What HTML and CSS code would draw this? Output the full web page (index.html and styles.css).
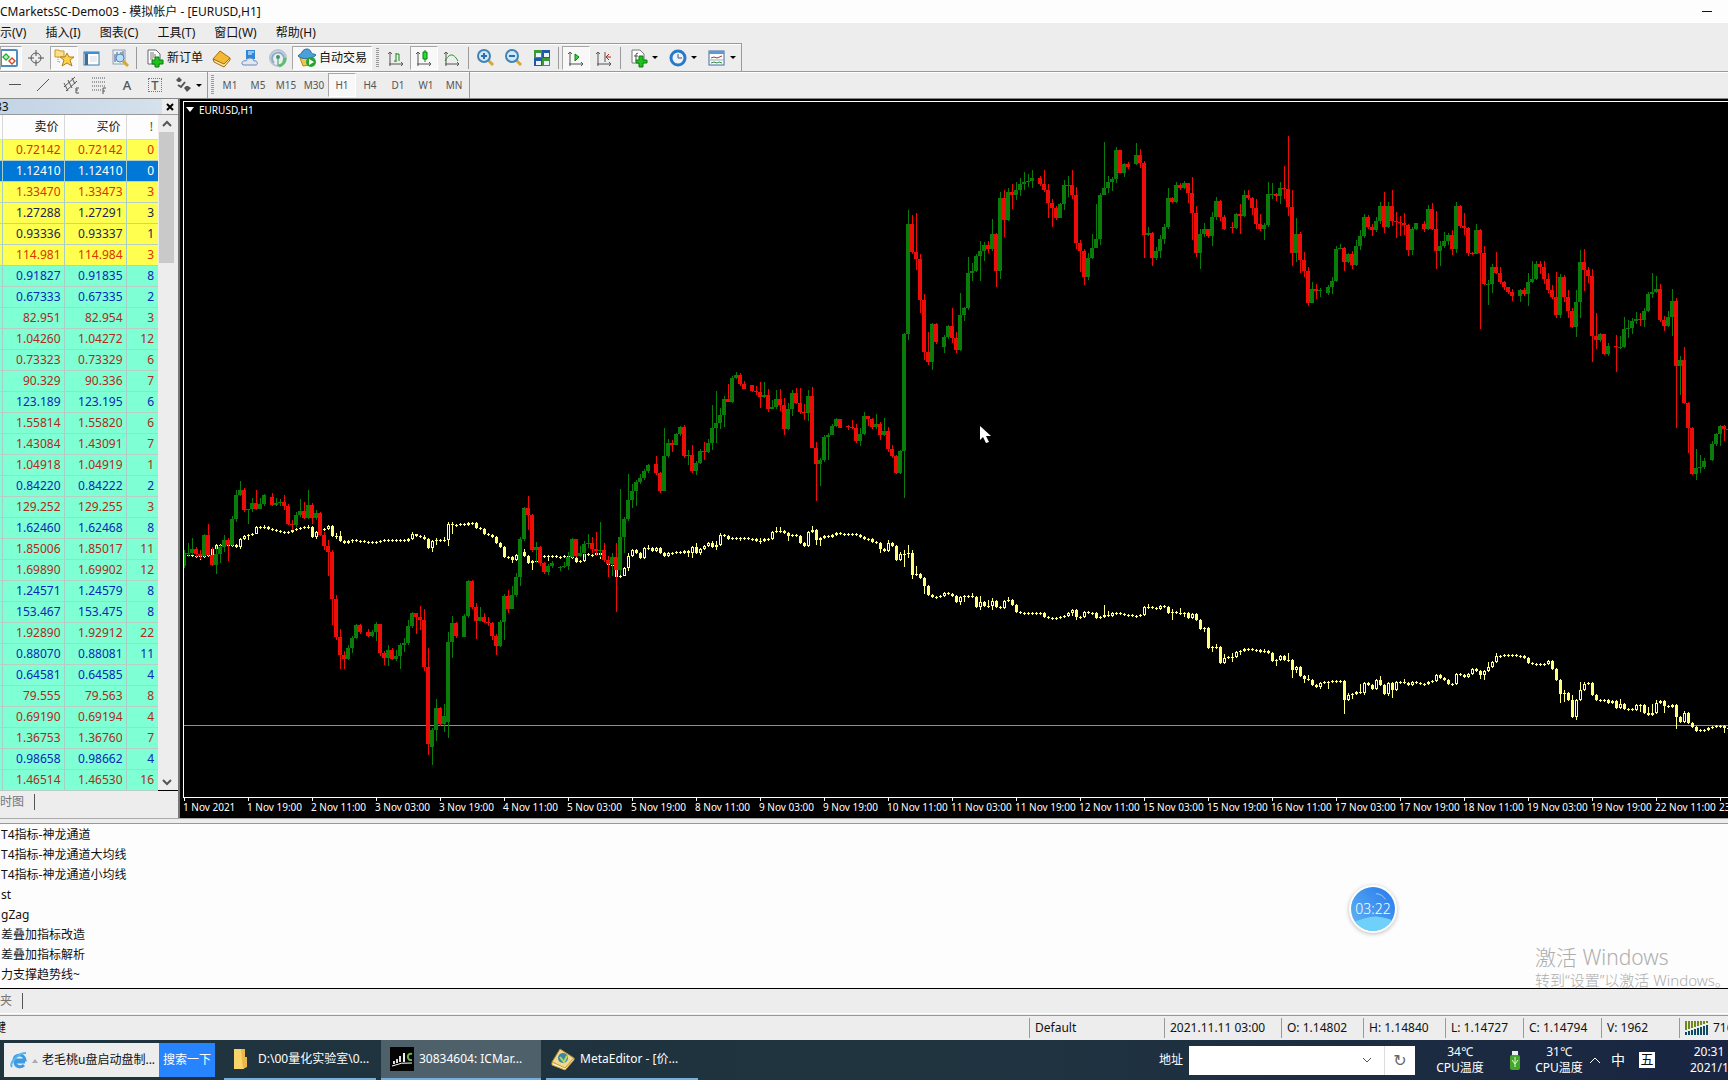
FILE: index.html
```html
<!DOCTYPE html>
<html lang="zh-CN">
<head>
<meta charset="utf-8">
<title>EURUSD,H1</title>
<link rel="stylesheet" href="styles.css">
</head>
<body>
<div class="app">
  <header class="titlebar">
    <h1 class="title">CMarketsSC-Demo03 - 模拟帐户 - [EURUSD,H1]</h1>
    <button class="minimize" aria-label="最小化"><svg width="10" height="2"><path d="M0 0h10v1H0z" fill="#111"/></svg></button>
  </header>
  <nav class="menubar">
    <button>示(V)</button><button>插入(I)</button><button>图表(C)</button><button>工具(T)</button><button>窗口(W)</button><button>帮助(H)</button>
  </nav>

  <div class="toolbar toolbar-main">
    <button class="tool first on" aria-label="市场报价"><svg width="20" height="20"><rect x="0" y="2" width="16" height="16" rx="1" fill="#fff" stroke="#4a8ec4" stroke-width="2"/><path d="M5 5l4 4-4 4-4-4z" fill="#1fae2d"/><path d="M5 7v4M3 9h4" stroke="#fff"/><path d="M11 9l4 4-4 4-4-4z" fill="#d0502a"/><path d="M11 11l2 2-2 2-2-2z" fill="#fff"/></svg></button>
    <button class="tool" aria-label="数据窗口"><svg width="20" height="20" fill="none" stroke="#555"><circle cx="10" cy="10" r="5"/><path d="M10 2v6M10 12v6M2 10h6M12 10h6"/></svg></button>
    <button class="tool on" aria-label="导航"><svg width="20" height="20"><path d="M1 2h4l1 1h4v6H1z" fill="#fbe08a" stroke="#c89a20"/><path d="M4 9v5h3" fill="none" stroke="#888" stroke-dasharray="1 1"/><path d="M13 5l2 4 5 0-4 3 2 6-5-3-5 3 2-6-4-3h5z" fill="#fcd24a" stroke="#b5801a"/></svg></button>
    <button class="tool" aria-label="终端"><svg width="20" height="20"><rect x="2" y="4" width="15" height="13" fill="#fff" stroke="#3e7ca8"/><path d="M2 4h15v2H2z" fill="#3e8ed0"/><path d="M3 6h3v11H3z" fill="#3a6ea0"/><path d="M8 9h7M8 11h7M8 13h7" stroke="#d2dbe4"/></svg></button>
    <button class="tool" aria-label="策略测试"><svg width="20" height="20"><rect x="3" y="2" width="12" height="14" fill="#e9f1f8" stroke="#8ba2b8"/><path d="M5 6v8M7 4v7M11 4v5M13 3v6" stroke="#557"/><circle cx="10" cy="10" r="4" fill="#bcdff8" stroke="#4a86b8"/><path d="M13 13l5 5" stroke="#d6a92e" stroke-width="3"/></svg></button>
    <span class="sep"></span>
    <button class="tool labelled" id="new-order"><svg width="20" height="20"><path d="M3 2h8l4 4v10H3z" fill="#fff" stroke="#666"/><path d="M5 5h4M5 7h6M5 9h6M5 11h3" stroke="#777"/><path d="M10 9h4v3h4v4h-4v3h-4v-3H7v-4h3z" fill="#1fc01f" stroke="#0c7c10"/></svg><span>新订单</span></button>
    <button class="tool" aria-label="MetaEditor"><svg width="20" height="20"><path d="M8 3l10 7-6 7L1 11z" fill="#f3b936" stroke="#a56c0d"/><path d="M1 11l1 3 10 5 6-7v-2l-6 6z" fill="#fbe6a8" stroke="#a56c0d"/></svg></button>
    <button class="tool" aria-label="虚拟主机"><svg width="20" height="20"><path d="M6 2h9v9H6z" fill="#2f86d6"/><path d="M8 4h6M8 6h4" stroke="#fff"/><path d="M3 17c-3-3 1-5 3-4 1-4 7-4 8 0 4-1 4 4 2 4z" fill="#dfe7f2" stroke="#6c89b8"/></svg></button>
    <button class="tool" aria-label="信号"><svg width="20" height="20" fill="none"><circle cx="10" cy="10" r="8" stroke="#b8c4d4" stroke-width="2"/><path d="M6 15a6 6 0 1 1 9-1" stroke="#8cabc8" stroke-width="2"/><circle cx="10" cy="9" r="2" fill="#3a9c5c"/><path d="M11 18c5-2 6-4 6-8" stroke="#5dbd70" stroke-width="3"/><path d="M10 10v8" stroke="#3a9c5c"/></svg></button>
    <button class="tool labelled on auto"><svg width="20" height="20"><path d="M3 10l12-1-2 8-7 1z" fill="#f1c64b" stroke="#b88a1a"/><path d="M1 8c2-3 3-1 4-4 2-4 8-4 9 0 1 3 3 1 5 3-3 4-14 5-18 1z" fill="#4aa0d8" stroke="#276fa4"/><circle cx="14" cy="14" r="5" fill="#27a52e"/><path d="M12 11l5 3-5 3z" fill="#fff"/></svg><span>自动交易</span></button>
    <span class="grip"></span>
    <button class="tool" aria-label="柱状图"><svg width="20" height="20" fill="none" stroke="#555"><path d="M4 18V4M2 6l2-2 2 2M3 16h14M15 14l2 2-2 2"/><path d="M10 5v9M8 13h2M10 6h3M13 6v7" stroke="#17871d"/></svg></button>
    <button class="tool on" aria-label="蜡烛图"><svg width="20" height="20" fill="none" stroke="#555"><path d="M4 18V4M2 6l2-2 2 2M3 16h14M15 14l2 2-2 2"/><path d="M11 2v12" stroke="#0a7c12"/><path d="M9 4h4v7H9z" fill="#20e030" stroke="#0a7c12"/></svg></button>
    <button class="tool" aria-label="折线图"><svg width="20" height="20" fill="none" stroke="#555"><path d="M4 18V4M2 6l2-2 2 2M3 16h14M15 14l2 2-2 2"/><path d="M3 13c4-7 8-9 13 0" stroke="#1c8a22"/></svg></button>
    <span class="sep"></span>
    <button class="tool" aria-label="放大"><svg width="20" height="20"><path d="M11 11l6 6" stroke="#d6a92e" stroke-width="3"/><circle cx="8" cy="8" r="6" fill="#cfe9fa" stroke="#4283b5" stroke-width="2"/><path d="M5 8h6M8 5v6" stroke="#2a70a4" stroke-width="2"/></svg></button>
    <button class="tool" aria-label="缩小"><svg width="20" height="20"><path d="M11 11l6 6" stroke="#d6a92e" stroke-width="3"/><circle cx="8" cy="8" r="6" fill="#cfe9fa" stroke="#4283b5" stroke-width="2"/><path d="M5 8h6" stroke="#2a70a4" stroke-width="2"/></svg></button>
    <button class="tool" aria-label="平铺窗口"><svg width="20" height="20"><path d="M2 2h8v8H2zM10 10h8v8h-8z" fill="#3a9a34"/><path d="M10 2h8v8h-8zM2 10h8v8H2z" fill="#2457a8"/><path d="M4 5h5v4H4zM12 5h5v4h-5zM4 13h5v4H4zM12 13h5v4h-5z" fill="#e9f4ff"/></svg></button>
    <span class="sep"></span>
    <button class="tool on" aria-label="自动滚动"><svg width="20" height="20" fill="none" stroke="#555"><path d="M4 18V4M2 6l2-2 2 2M3 16h14M15 14l2 2-2 2"/><path d="M9 6l4 3-4 4z" fill="#35d53c" stroke="#0c7c10"/></svg></button>
    <button class="tool" aria-label="图表平移"><svg width="20" height="20" fill="none" stroke="#555"><path d="M4 18V4M2 6l2-2 2 2M3 16h14M15 14l2 2-2 2M11 4v10"/><path d="M17 9h-5M15 6l-3 3 3 3" stroke="#b02a20"/></svg></button>
    <span class="sep"></span>
    <button class="tool drop" aria-label="技术指标"><svg width="20" height="20"><path d="M3 2h8l4 4v9H3z" fill="#fff" stroke="#777"/><path d="M7 13V6l2-1M5 8h4" fill="none" stroke="#555"/><path d="M10 8h4v4h4v3h-4v4h-4v-4H7v-3h3z" fill="#1fc01f" stroke="#0c7c10"/></svg><i class="arrow"></i></button>
    <button class="tool drop" aria-label="时间周期"><svg width="20" height="20"><circle cx="10" cy="10" r="7" fill="#eaf3fc" stroke="#2a78c8" stroke-width="3"/><path d="M10 6v4h4" fill="none" stroke="#555"/></svg><i class="arrow"></i></button>
    <button class="tool drop" aria-label="模板"><svg width="20" height="20"><rect x="2" y="3" width="15" height="14" fill="#fff" stroke="#3e6d9c"/><path d="M2 3h15v3H2z" fill="#5c9ad6"/><path d="M4 10l3-1 3 1 5-2" fill="none" stroke="#a04030"/><path d="M2 12h15" stroke="#9ab"/><path d="M4 15l3-1 3 1 2-1 3 1" fill="none" stroke="#2c8a3c"/></svg><i class="arrow"></i></button>
  </div>

  <div class="toolbar toolbar-lines">
    <button class="tool wide" aria-label="水平线"><svg width="20" height="20"><path d="M4 9h12v1H4z" fill="#555"/></svg></button>
    <button class="tool" aria-label="趋势线"><svg width="20" height="20"><path d="M4 16L16 4" stroke="#555"/></svg></button>
    <button class="tool" aria-label="等距通道"><svg width="20" height="20" fill="none" stroke="#555"><path d="M3 12L14 2M5 16L16 6M3 8l4 8M7 5l4 8M11 3l3 6"/><path d="M18 13h-3v5h3M15 15h2"/></svg></button>
    <button class="tool" aria-label="斐波纳奇"><svg width="20" height="20" fill="none" stroke="#555"><path d="M3 3h14M3 7h14M3 11h14M3 15h9" stroke-dasharray="1 1"/><path d="M17 13h-3v6M14 16h2"/></svg></button>
    <button class="tool glyph">A</button>
    <button class="tool glyph" aria-label="文本标签"><span class="dotted">T</span></button>
    <button class="tool drop short" aria-label="箭头"><svg width="20" height="20"><path d="M3 5l3-3 3 3-2 2H5zM11 13l3 4 4-4-3-2h-2z" fill="#555"/><path d="M5 10l3 2 4-5" fill="none" stroke="#555" stroke-width="2"/></svg><i class="arrow"></i></button>
    <span class="sep tall"></span><span class="grip"></span>
    <button class="tool tf">M1</button><button class="tool tf">M5</button><button class="tool tf">M15</button><button class="tool tf">M30</button><button class="tool tf on">H1</button><button class="tool tf">H4</button><button class="tool tf">D1</button><button class="tool tf">W1</button><button class="tool tf">MN</button>
    <span class="sep tall"></span>
  </div>

  <main class="workspace">
    <section class="quotes">
      <div class="quotes-head"><span>33</span><button class="close" aria-label="关闭"><svg width="8" height="8"><path d="M1 1l6 6M7 1L1 7" stroke="#000" stroke-width="2"/></svg></button></div>
      <div class="quotes-body">
        <table class="rates">
          <thead><tr><th class="edge"></th><th>卖价</th><th>买价</th><th>!</th></tr></thead>
          <tbody>
            <tr class="y r"><td></td><td>0.72142</td><td>0.72142</td><td>0</td></tr>
            <tr class="sel"><td></td><td>1.12410</td><td>1.12410</td><td>0</td></tr>
            <tr class="y r"><td></td><td>1.33470</td><td>1.33473</td><td>3</td></tr>
            <tr class="y b"><td></td><td>1.27288</td><td>1.27291</td><td>3</td></tr>
            <tr class="y b"><td></td><td>0.93336</td><td>0.93337</td><td>1</td></tr>
            <tr class="y r"><td></td><td>114.981</td><td>114.984</td><td>3</td></tr>
            <tr class="b"><td></td><td>0.91827</td><td>0.91835</td><td>8</td></tr>
            <tr class="b"><td></td><td>0.67333</td><td>0.67335</td><td>2</td></tr>
            <tr class="r"><td></td><td>82.951</td><td>82.954</td><td>3</td></tr>
            <tr class="r"><td></td><td>1.04260</td><td>1.04272</td><td>12</td></tr>
            <tr class="r"><td></td><td>0.73323</td><td>0.73329</td><td>6</td></tr>
            <tr class="r"><td></td><td>90.329</td><td>90.336</td><td>7</td></tr>
            <tr class="b"><td></td><td>123.189</td><td>123.195</td><td>6</td></tr>
            <tr class="r"><td></td><td>1.55814</td><td>1.55820</td><td>6</td></tr>
            <tr class="r"><td></td><td>1.43084</td><td>1.43091</td><td>7</td></tr>
            <tr class="r"><td></td><td>1.04918</td><td>1.04919</td><td>1</td></tr>
            <tr class="b"><td></td><td>0.84220</td><td>0.84222</td><td>2</td></tr>
            <tr class="r"><td></td><td>129.252</td><td>129.255</td><td>3</td></tr>
            <tr class="b"><td></td><td>1.62460</td><td>1.62468</td><td>8</td></tr>
            <tr class="r"><td></td><td>1.85006</td><td>1.85017</td><td>11</td></tr>
            <tr class="r"><td></td><td>1.69890</td><td>1.69902</td><td>12</td></tr>
            <tr class="b"><td></td><td>1.24571</td><td>1.24579</td><td>8</td></tr>
            <tr class="b"><td></td><td>153.467</td><td>153.475</td><td>8</td></tr>
            <tr class="r"><td></td><td>1.92890</td><td>1.92912</td><td>22</td></tr>
            <tr class="b"><td></td><td>0.88070</td><td>0.88081</td><td>11</td></tr>
            <tr class="b"><td></td><td>0.64581</td><td>0.64585</td><td>4</td></tr>
            <tr class="r"><td></td><td>79.555</td><td>79.563</td><td>8</td></tr>
            <tr class="r"><td></td><td>0.69190</td><td>0.69194</td><td>4</td></tr>
            <tr class="r"><td></td><td>1.36753</td><td>1.36760</td><td>7</td></tr>
            <tr class="b"><td></td><td>0.98658</td><td>0.98662</td><td>4</td></tr>
            <tr class="r"><td></td><td>1.46514</td><td>1.46530</td><td>16</td></tr>
          </tbody>
        </table>
        <div class="scroll">
          <button aria-label="向上"><svg width="10" height="8" fill="none" stroke="#555" stroke-width="2"><path d="M1 6l4-4 4 4"/></svg></button>
          <div class="thumb"></div>
          <button aria-label="向下"><svg width="10" height="8" fill="none" stroke="#555" stroke-width="2"><path d="M1 2l4 4 4-4"/></svg></button>
        </div>
      </div>
      <div class="tabs quote-tabs"><button class="tab">时图</button></div>
    </section>

    <section class="chart">
      <div class="plot">
        <div class="symbol"><svg width="8" height="5"><path d="M0 0h8L4 5z" fill="#fff"/></svg><span>EURUSD,H1</span></div>
        <svg class="candles" id="candles"></svg>
        <svg class="cursor" width="14" height="20"><path d="M1 1v14l3-3 3 6 3-1-3-6h5z" fill="#fff"/></svg>
      </div>
      <div class="axis">
        <span>1 Nov 2021</span><span>1 Nov 19:00</span><span>2 Nov 11:00</span><span>3 Nov 03:00</span><span>3 Nov 19:00</span><span>4 Nov 11:00</span><span>5 Nov 03:00</span><span>5 Nov 19:00</span><span>8 Nov 11:00</span><span>9 Nov 03:00</span><span>9 Nov 19:00</span><span>10 Nov 11:00</span><span>11 Nov 03:00</span><span>11 Nov 19:00</span><span>12 Nov 11:00</span><span>15 Nov 03:00</span><span>15 Nov 19:00</span><span>16 Nov 11:00</span><span>17 Nov 03:00</span><span>17 Nov 19:00</span><span>18 Nov 11:00</span><span>19 Nov 03:00</span><span>19 Nov 19:00</span><span>22 Nov 11:00</span><span>23 Nov 03:00</span>
      </div>
    </section>
  </main>

  <section class="navigator">
    <ul class="scripts">
      <li>T4指标-神龙通道</li><li>T4指标-神龙通道大均线</li><li>T4指标-神龙通道小均线</li><li>st</li><li>gZag</li><li>差叠加指标改造</li><li>差叠加指标解析</li><li>力支撑趋势线~</li>
    </ul>
    <div class="timer"><svg width="44" height="44" viewBox="0 0 46 46"><defs><linearGradient id="sky" x1="0" y1="1" x2="1" y2="0"><stop offset="0" stop-color="#63b8f3"/><stop offset="1" stop-color="#2878ec"/></linearGradient><clipPath id="disc"><circle cx="23" cy="23" r="23"/></clipPath></defs><circle cx="23" cy="23" r="23" fill="url(#sky)"/><path d="M0 37c10-2 18-7 28-6 8 1 12 2 18 5v12H0z" fill="#6fd0fa" clip-path="url(#disc)"/><path d="M26 7c5 0 8 3 10 6" fill="none" stroke="#9fd0ff"/></svg><span>03:22</span></div>
    <div class="watermark"><strong>激活 Windows</strong><span>转到“设置”以激活 Windows。</span></div>
  </section>
  <div class="tabs nav-tabs"><button class="tab">夹</button></div>

  <footer class="status">
    <span class="hint">键</span>
    <span class="cell profile">Default</span><span class="cell date">2021.11.11 03:00</span><span class="cell ohlc">O: 1.14802</span><span class="cell ohlc">H: 1.14840</span><span class="cell">L: 1.14727</span><span class="cell">C: 1.14794</span><span class="cell">V: 1962</span>
    <span class="cell link"><svg width="24" height="14"><path d="M1 0v9M4 0v8M7 0v7M10 0v6M13 0v5M16 0v4M19 0v3M22 0v2" stroke="#6f8a1a" stroke-width="2"/><path d="M1 11v3M4 10v4M7 9v5M10 8v6M13 7v7M16 6v8M19 5v9M22 4v10" stroke="#0d4a64" stroke-width="2"/></svg>716</span>
  </footer>

  <footer class="taskbar">
    <div class="search">
      <svg width="18" height="18" fill="none"><path d="M15 11H5c0 5 6 6 9 3M4 9c0-6 10-7 11 0H5" stroke="#3c9be4" stroke-width="3"/><path d="M2 16C-1 12 8 2 16 2" stroke="#56b4f2" stroke-width="2"/></svg>
      <svg width="6" height="5"><path d="M0 5h6L3 1z" fill="#aaa"/></svg>
      <span>老毛桃u盘启动盘制...</span>
    </div>
    <button class="search-go">搜索一下</button>
    <button class="task"><svg width="24" height="24"><path d="M5 2h10v20H5z" fill="#fbd36b"/><path d="M12 2h4v8h2v10l-4 2z" fill="#e8b848"/></svg><span>D:\00量化实验室\0...</span></button>
    <button class="task current"><svg width="24" height="24"><path d="M0 0h24v24H0z" fill="#050505"/><path d="M2 19q9-4 20-3" stroke="#fff" fill="none"/><path d="M4 17v-3M7 16v-4M10 15v-6" stroke="#ddd" stroke-width="2"/><path d="M14 6v9" stroke="#eee" stroke-width="2"/><path d="M22 7c-5-2-6 7 0 6" stroke="#6cb848" stroke-width="2" fill="none"/></svg><span>30834604: ICMar...</span></button>
    <button class="task"><svg width="24" height="24"><path d="M9 2l14 9-9 11L1 15z" fill="#f0d890" stroke="#b18428"/><path d="M1 15v3l13 5 9-10v-2l-9 10z" fill="#fff4cc" stroke="#c79a30"/><circle cx="12" cy="11" r="5" fill="#3b86a8"/><path d="M9 10l4 5 3-6" stroke="#b6d85a" stroke-width="2" fill="none"/></svg><span>MetaEditor - [价...</span></button>
    <div class="tray">
      <label for="address">地址</label>
      <div class="address"><input id="address" type="text"><svg width="10" height="8" fill="none" stroke="#555"><path d="M1 2l4 4 4-4"/></svg><button aria-label="刷新">↻</button></div>
      <div class="temp">34℃<br>CPU温度</div>
      <svg class="usb" width="10" height="20"><path d="M2 1h6v4H2z" fill="#eee"/><rect x="0" y="5" width="10" height="15" rx="2" fill="#46a52c"/><path d="M5 7v10M2 10l3 4 3-4" fill="none" stroke="#d8ffd0"/></svg>
      <div class="temp second">31℃<br>CPU温度</div>
      <button class="tray-up" aria-label="显示隐藏的图标"><svg width="12" height="8" fill="none" stroke="#fff"><path d="M1 7l5-5 5 5"/></svg></button>
      <span class="ime">中</span><span class="wubi">五</span>
      <div class="clock">20:31<br>2021/1</div>
    </div>
  </footer>
</div>
<script src="chart.js"></script>
</body>
</html>
```
FILE: styles.css
```css
* { box-sizing: border-box; }
body { margin: 0; overflow: hidden; background: #ededed; color: #111; font: 12px/20px "Noto Sans", "Noto Sans CJK SC", sans-serif; }
button { border: 0; padding: 0; margin: 0; background: none; font: inherit; color: inherit; white-space: nowrap; }
svg { display: block; flex: none; }
.app { display: flex; flex-direction: column; min-height: 100vh; overflow: hidden; }

.titlebar { display: flex; justify-content: space-between; align-items: center; height: 23px; padding-right: 12px; background: #fdfdfd; overflow: hidden; }
.title { margin: 0; font-size: 12px; font-weight: 400; white-space: nowrap; }
.minimize { padding: 4px; }
.menubar { display: flex; gap: 19px; height: 20px; }

.toolbar { display: flex; align-items: center; height: 27px; border-top: 1px solid #9a9a9a; box-shadow: inset 0 1px #fff; overflow: hidden; }
.toolbar-main { height: 28px; width: 742px; border-right: 1px solid #9a9a9a; }
.toolbar-lines { color: #555; }
.tool { display: flex; align-items: center; justify-content: center; flex: none; width: 28px; height: 24px; }
.tool.first { width: 22px; }
.tool.on { background: #f8f8f8; border: 1px solid #a8a8a8; border-right-color: #fff; border-bottom-color: #fff; }
.tool.labelled { width: 68px; gap: 2px; }
.tool.auto { width: 80px; margin-right: 1px; }
.tool.drop { width: 39px; gap: 3px; }
.tool.drop.short { width: 37px; }
.tool.wide { width: 29px; }
.arrow { border: 3px solid transparent; border-top-color: #000; border-bottom: 0; }
.sep { flex: none; width: 1px; height: 22px; margin: 0 3px 0 2px; background: #9a9a9a; }
.sep.tall { height: 27px; margin: 0 0 0 1px; }
.grip { flex: none; width: 3px; height: 20px; margin: 0 3px; background: repeating-linear-gradient(#999 0 1px, #ededed 1px 2px); }
.sep.tall + .grip { margin-right: 2px; }
.glyph { font-size: 13px; font-weight: 500; }
.dotted { width: 14px; height: 14px; line-height: 12px; border: 1px dotted #777; }
.tf { font-size: 10px; }

.workspace { display: flex; height: 721px; border-top: 1px solid #888; border-bottom: 1px solid #aaa; }
.quotes { display: flex; flex-direction: column; flex: none; width: 178px; }
.quotes-head { display: flex; align-items: center; justify-content: space-between; height: 16px; padding-right: 4px; border-bottom: 1px solid #9a9a9a; background: linear-gradient(90deg, #c3d4e6, #d5e1ec) no-repeat 0 0 / 162px 100%; overflow: hidden; }
.quotes-head span { margin-left: -5px; }
.quotes-body { display: flex; flex: none; height: 676px; border-bottom: 1px solid #000; }
.rates { width: 158px; border-collapse: collapse; table-layout: fixed; }
.rates th, .rates td { height: 21px; padding: 0 3px 0 0; line-height: 20px; text-align: right; border-right: 1px solid #a5cfc6; border-bottom: 1px solid #b8cfc6; }
.rates th { height: 24px; padding-right: 5px; font-weight: 400; background: #fdfdfd; border-color: #d8d8d8; }
.rates .edge { width: 2px; padding: 0; }
.rates th:nth-child(2) { width: 62px; }
.rates th:nth-child(3) { width: 62px; }
.rates td:first-child { padding: 0; }
.rates td:last-child { padding-right: 4px; border-right: 0; }
.rates th:last-child { border-right: 0; color: #3a5a3a; }
.rates tbody { background: #7fffd4; }
.r { color: #b02a20; }
.b { color: #0a28b8; }
.y { background: #ffff50; }
.y.r { color: #d83400; }
.y.b { color: #1c2450; }
.sel { background: #0078d7; color: #fff; }
.scroll { display: flex; flex-direction: column; width: 17px; background: #ededed; }
.scroll button { display: flex; align-items: center; justify-content: center; height: 17px; }
.scroll .thumb { height: 131px; margin: 0 1px; background: #c9c9c9; }
.scroll button:last-child { margin-top: auto; }
.tabs { display: flex; align-items: center; height: 26px; color: #777; }
.quote-tabs { height: 22px; }
.tab { height: 16px; padding-right: 10px; line-height: 14px; border-right: 1px solid #555; }

.chart { display: flex; flex-direction: column; flex: 1; min-width: 0; padding: 2px 0 0 2px; border-left: 2px solid #777; background: #000; color: #fff; overflow: hidden; }
.plot { position: relative; flex: 1; margin-left: 1px; border: 1px solid #fff; border-right: 0; }
.symbol { display: flex; align-items: center; gap: 5px; height: 15px; padding-left: 2px; font-size: 10px; }
.candles { position: absolute; inset: 0; width: 100%; height: 100%; shape-rendering: crispEdges; }
.cursor { position: absolute; left: 795px; top: 323px; }
.axis { display: flex; height: 20px; margin-left: 1px; overflow: hidden; }
.axis span { flex: none; width: 64px; font-size: 10px; line-height: 18px; white-space: nowrap; background: linear-gradient(#fff, #fff) no-repeat 1px 0 / 1px 3px; }

.navigator { position: relative; height: 166px; margin-top: 4px; border-top: 1px solid #999; border-bottom: 1px solid #000; background: #fdfdfd; }
.scripts { margin: 0; padding: 1px 1px 0; list-style: none; }
.timer { position: absolute; right: 331px; top: 61px; padding: 2px; border-radius: 50%; background: #fff; box-shadow: 0 1px 4px #bbb; }
.timer span { position: absolute; inset: 2px; display: flex; align-items: center; justify-content: center; color: #fff; font-size: 14px; font-weight: 300; }
.watermark { position: absolute; left: calc(100% - 193px); bottom: -1px; color: #aeaeae; white-space: nowrap; }
.watermark strong { display: block; font-size: 21px; line-height: 28px; font-weight: 300; }
.watermark span { display: block; font-size: 15px; font-weight: 300; line-height: 18px; }
.nav-tabs { height: 25px; border-bottom: 1px solid #fff; }

.status { display: flex; align-items: center; height: 25px; margin-top: 1px; border-top: 1px solid #999; overflow: hidden; }
.hint { flex: 1; margin-left: -6px; }
.cell { flex: none; width: 78px; height: 20px; padding-left: 5px; line-height: 20px; border-left: 1px solid #999; white-space: nowrap; }
.profile { width: 135px; }
.date { width: 117px; }
.ohlc { width: 82px; }
.link { display: flex; align-items: center; gap: 4px; width: 49px; }

.taskbar { display: flex; height: 40px; padding-left: 4px; background: linear-gradient(90deg, #20343e, #1f3340 60%, #192542); color: #fff; overflow: hidden; }
.search { display: flex; align-items: center; gap: 4px; flex: none; width: 155px; height: 34px; margin-top: 3px; padding-left: 6px; background: #ededed; color: #111; white-space: nowrap; overflow: hidden; }
.search-go { flex: none; width: 56px; height: 34px; margin: 3px 9px 0 0; background: #2684ff; }
.task { display: flex; align-items: center; gap: 5px; flex: none; width: 152px; margin-right: 5px; padding-left: 5px; border-bottom: 2px solid #76aede; }
.task.current { width: 160px; padding-left: 9px; background: #4e616b; }
.tray { display: flex; align-items: center; flex: none; margin-left: auto; line-height: 16px; }
.address { display: flex; align-items: center; width: 226px; height: 29px; margin: 0 21px 0 6px; background: #fff; }
.address input { flex: 1; min-width: 0; height: 29px; border: 0; background: none; }
.address button { width: 31px; height: 29px; margin-left: 12px; border-left: 1px solid #ddd; color: #666; font: 16px "DejaVu Sans", sans-serif; }
.temp { width: 48px; text-align: center; white-space: nowrap; }
.usb { margin: 0 15px 0 26px; }
.tray-up { width: 12px; margin: 0 10px 0 6px; }
.ime { width: 16px; margin-right: 12px; font-size: 14px; }
.wubi { width: 16px; height: 16px; background: #fff; color: #111; line-height: 14px; font-size: 13px; text-align: center; }
.clock { width: 38px; margin-left: 35px; text-align: center; }
```
FILE: chart.js
```js
// Price bars, one per hour: "close high low" in plot rows. The open is the
// previous close; "-" is a session break and "open:close high low" restarts.
const EURUSD = `566:553 550 568,553 543 557,549 538 555,554 547 557,556 550 559,535 534 557,555 524 556,565 547 566,554 546 574,547 545 563,540 535 552,545 538 561,519 516 546,495 490 522,490 481 496,510 488 512,509 509 524,503 498 512,509 490 510,504 498 509,495 494 506,-,497:505 493 506,503 498 506,502 499 506,506 495 510,524 504 525,525 520 530,515 512 527,511 499 517,518 502 519,505 490 519,518 503 524,513 510 520,535 512 536,546 532 550,552 540 576,599 550 625,637 595 640,655 629 669,659 651 669,648 645 660,638 636 653,625 624 639,632 624 634,-,632:636 629 637,632 630 637,624 622 641,653 624 656,658 651 665,650 645 666,659 648 660,656 650 661,645 643 669,643 638 652,626 620 645,613 612 628,617 613 634,620 606 630,667 609 671,744 648 755,747:730 728 765,708 699 741,724 707 726,716 704 732,722:642 632 738,623 616 658,636 622 638,-,637:616 614 637,581 580 618,607 580 609,621 603 639,617 607 621,622 613 623,623 617 626,636 622 640,646 634 655,622 620 647,596 594 640,609 590 613,595 586 609,577 573 597,539 537 586,508 507 541,515 496 530,550 514 552,547 542 563,563 546 566,572 562 574,566 564 575,563 561 568,-,568:567 566 571,566 562 568,557 552 570,539 538 558,556 539 557,553 546 557,544 541 557,543 534 548,549 537 553,551 532 556,550 522 557,560 543 562,564 556 577,557 553 576,570 543 612,537 489 575,519 517 553,500 474 521,491 484 508,482 480 506,478 474 484,471 469 480,465 464 473,-,464:473 456 475,491 472 493,456 428 491,443 439 458,445 440 452,434 433 445,427 426 436,456 425 458,455 450 465,471 445 473,463 461 475,451 449 464,452 442 460,443 439 453,428 405 450,423 391 443,415 408 429,399 396 427,402 384 402,378 376 403,375 372 379,384 373 386,389 381 389,-,385:391 385 392,392 386 395,397 382 408,395 382 398,409 389 412,407 400 409,399 390 409,405 389 411,429 398 435,409 403 430,393 390 416,403 388 404,412 388 414,413 404 420,396 390 421,448 387 448,464 442 501,460 458 486,437 435 462,435 433 460,426 424 435,419 418 427,428 420 428,-,426:427 425 430,428 420 429,441 424 443,434 428 446,416 412 435,419 416 426,427 418 429,424 414 429,435 422 440,431 418 436,449 427 452,456 445 458,473 455 474,451 450 474,334 333 498,224 210 340,252 215 254,259 213 270,300 254 313,352 294 360,362 332 365,324 323 370,342 323 344,-,347:337 335 353,326 325 339,338 308 343,350 332 353,315 293 351,308 307 321,273 257 310,271 263 281,256 254 272,251 241 281,245 242 261,249 241 253,234 219 251,271 233 287,198 192 279,220 190 237,192 188 221,195 184 209,190 182 200,184 178 196,182 172 190,181 174 187,178 170 188,-,178:184 176 186,190 170 192,203 184 218,208 199 227,218 206 220,204 203 218,185 180 210,185 176 197,195 170 199,243 187 249,251 240 272,277 249 285,258 253 280,248 234 259,239 204 248,195 193 245,188 142 194,182 176 193,179 177 191,150 147 183,173 150 173,164 163 177,167 162 169,-,164:155 143 165,163 149 168,235 161 258,233 227 236,258 232 266,251 247 260,239 235 258,227 224 244,198 188 229,202 197 203,185 182 203,188 183 190,183 181 189,193 183 203,213 177 240,253 206 257,234 229 269,229 223 237,236 229 238,217 212 246,201 197 220,217 200 221,229 215 230,-,227:228 222 233,214 213 229,216 204 234,195 190 217,198 190 200,208 197 215,224 199 229,229 214 231,225 223 240,194 182 227,194 183 199,196 193 201,188 182 204,189 166 199,207 136 216,253 190 266,234 218 262,260 232 273,271 252 277,303 267 306,289 282 303,291 284 299,290 288 297,-,293:287 285 295,281 277 294,249 246 282,248 244 249,262 247 271,254 253 263,265 251 269,246 240 266,236 230 250,217 214 238,227 215 229,230 224 236,221 217 232,206 202 224,227 192 233,206 202 228,221 190 226,222 212 238,223 216 236,225 213 235,250 224 256,229 227 255,223 223 230,-,224:229 221 232,209 205 230,229 203 230,251 211 269,246 241 266,241 232 248,235 233 245,249 230 255,206 202 253,226 205 228,228 213 235,253 227 256,254 252 255,230 224 254,253 229 329,284 246 285,284 280 305,267 264 293,273 252 274,282 267 284,287 281 290,292 287 294,296 289 301,-,296:290 289 302,294 288 296,282 273 306,279 261 283,264 261 280,267 261 274,279 261 284,290 273 293,297 285 299,315 272 318,277 274 318,297 275 302,311 290 318,327 308 328,302 290 337,262 250 318,270 249 291,276 267 283,336 269 362,340 313 349,334 333 342,354 334 355,346 343 356,-,346:347 335 372,347 336 349,329 317 348,328 320 338,321 318 334,319 312 324,320 313 326,311 308 327,294 292 312,292 273 298,289 276 293,320 284 322,326 316 331,317 311 327,301 289 336,366 298 428,360 356 395,403 347 404,428 402 453,474 427 475,468 449 480,467 455 473,461 458 469,-,460:444 441 461,434 433 446,426 425 446,429 425 441,430 427 436`;

// Overlay series: "close", optionally followed by "h" high and "l" low.
const OVERLAY = `555 555 556 556 556l560 556 555 549 545 545 545 546 545 547 539l549 536 535l540 534 527l534 528 527h525 529 530 531 532 533 532 530 529 528 527 527h525 537 532l539 529 529 526 536 536h533l539 541h531 543 541 540l543 541 541 542 543 542 542 541 540 540 540 540 540 541 539 534h532 536h534 537 539h535 548 541l552 540h538l545 540 540h537 524h522l546 525h522l534 525 524 525 523 523 528 529 534 535 537 543 547 557 557 560l563 555 552 556h549 563 561l570 561 557 556 556l561 556 557 557 556 556 558 562 561 554 555 555 553 555h552l559 560 565 566 577 576 568l576 556h553l571 550l557 553 558 548 548h545 551 548 553 556 553l557 553 552 553 551 553l557 547h546l558 553h543 549l555 546 543 547h541 545h541l550 535h533 536 539 538 538 538l541 538 539 539 541 541h538l544 539 539 532 531h527 531h527 533 536l541 535 536 543 546 532l547 530h526 540h529l545 538l546 536 537 535 533 534 534 534 534 535 537 539 539 542 543 549l553 551 543h540l552 546 560 554h552 554h550l567 553h545l558 575h550l579 574h566 578 586l594 595 597 597 596 593 594h592 596 602 597l605 596l602 596 597h593 607 602h596l610 606 606h600 601h598l610 607 608 601l609 600h597 605 612 613 614 613 613 613 613 617 618 618 618 617 616 613 610l616 617h609l620 617 612 613 613 618 617 615h605 616h611 613 613 614 615 615 616 616 615 607 607h604 608 609 606 607 613 612h609l620 613 613h608 613l617 618 614 620 629 628l632 648 647l652 647h644 663 658h654 657 657h653l662 652 651l655 649 649 650 650 652 651h649 653 661 660l666 656 660 660h653 670l678 667l673 676 679l683 680h675 685 687 683l689 682 682l689 681 681 681 700l714 695h693 694l699 692 693h684 683l695 685 689 680 685h676 694 683l696 690l698 682 682 683h679 685 682 683 684 684 682 681 675 678 680 684 684 674l685 675 677 674 669 671 675l679 671l680 667h662 662 656h653 656 655 655 655 656 656 658 663 664 664 664 664 661 669 680 694l703 693h690l702 700 717h695 700l720 690h682 684h682 683 695 700 700 700 703 701 708 704h699 709 709 710 705 705l712 713 715h707 713h704 703h700 701 706l713 707 705 717l729 722 713h711 723 727 731 730 730 728 727 726 726 728l733 728`;

const svg = document.getElementById("candles");
const PLOT_TOP = 102;
const STEP = 4;

function rect(x, y, w, h, fill) {
  const el = document.createElementNS("http://www.w3.org/2000/svg", "rect");
  el.setAttribute("x", x);
  el.setAttribute("y", y - PLOT_TOP);
  el.setAttribute("width", w);
  el.setAttribute("height", h);
  el.setAttribute("fill", fill);
  svg.append(el);
}

rect(0, 725, 8000, 1, "#8a8f94");

let last = 555;
OVERLAY.split(" ").forEach((bar, i) => {
  const close = parseInt(bar, 10);
  const top = Math.min(last, close);
  const bottom = Math.max(last, close, top + 1);
  const high = /h(\d+)/.exec(bar);
  const low = /l(\d+)/.exec(bar);
  const hi = high ? +high[1] : top - 1;
  const lo = low ? +low[1] : bottom + 1;
  const x = i * STEP;
  rect(x, hi, 1, lo - hi, "#ffff80");
  rect(x - 1, top, 3, bottom - top, "#ffff80");
  if (close < last && bottom - top > 2) rect(x, top + 1, 1, bottom - top - 2, "#000");
  last = close;
});

let previous = 566;
EURUSD.split(",").forEach((bar, i) => {
  if (bar === "-") return;
  const [body, high, low] = bar.split(" ");
  const parts = body.split(":").map(Number);
  const close = parts[parts.length - 1];
  const open = parts.length > 1 ? parts[0] : previous;
  const color = close > open ? "#ee0c06" : "#0a7c0a";
  const x = i * STEP;
  rect(x, +high, 1, low - high, color);
  rect(x - 2, Math.min(open, close), 4, Math.max(1, Math.abs(close - open)), color);
  previous = close;
});
```
